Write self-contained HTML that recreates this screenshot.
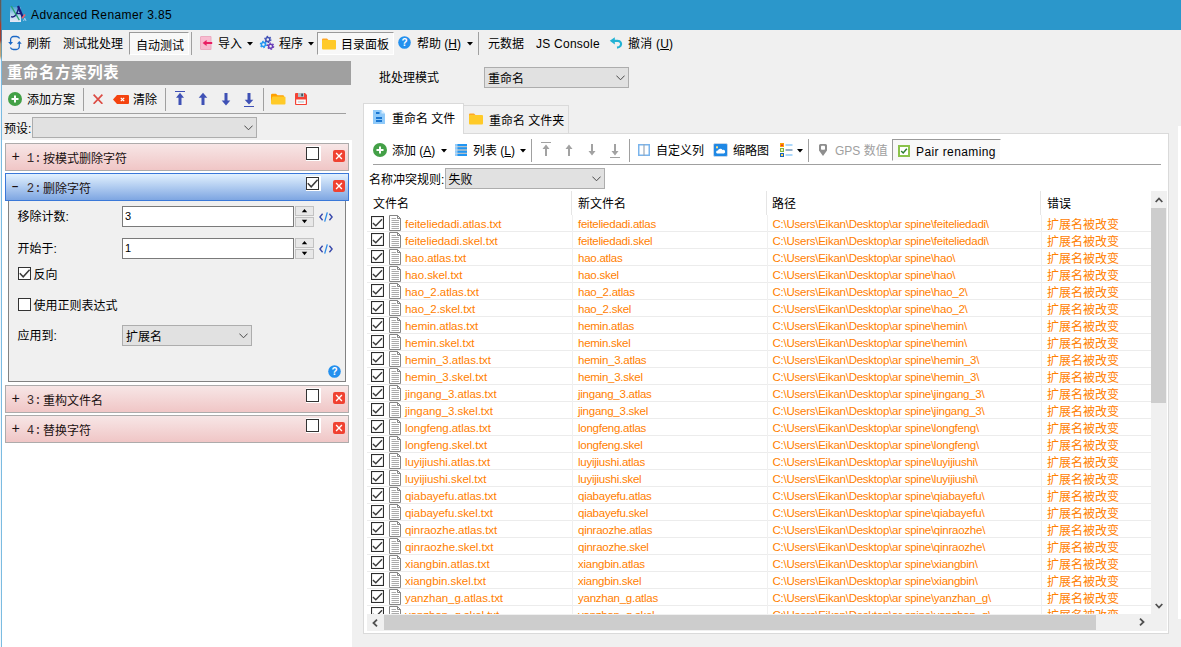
<!DOCTYPE html>
<html lang="zh"><head><meta charset="utf-8"><title>Advanced Renamer 3.85</title>
<style>
html,body{margin:0;padding:0}
body{width:1181px;height:647px;overflow:hidden;background:#f0f0f0;position:relative;font-family:"Liberation Sans","Noto Sans CJK SC",sans-serif;font-size:12px;color:#000}
div,span,svg{position:absolute;white-space:nowrap}
.t{line-height:16px;height:16px}
.edgeL{left:0;top:0;width:2px;height:647px;background:linear-gradient(#5c5c5c 0,#6a5a56 20px,#a43c2c 24px,#a8402e 40px,#c09a6c 44px,#c8a878 56px,#eef4fa 60px,#f4f8fc 100%)}
.edgeB{left:1px;top:0;width:1px;height:647px;background:rgba(59,155,210,.65)}
.title{left:2px;top:0;width:1179px;height:30px;background:#2b97cb}
.hdr{left:2px;top:61px;width:349px;height:24px;background:#a0a0a0}
.hdr span{left:5px;top:2px;letter-spacing:.65px;font:700 15.400px/20px "Liberation Sans","Noto Sans CJK SC",sans-serif;color:#fff}
.vsep{width:1px;background:#a0a0a0}
.combo{background:#e1e1e1;border:1px solid #adadad;box-sizing:border-box}
.white{background:#fff}
.item{left:5px;width:344px;height:28px;box-sizing:border-box;border:1px solid #adabab;background:linear-gradient(#f7e6e6,#f0c6c6)}
.item.sel{border-color:#3a78d8;background:linear-gradient(#e2f1fe,#7ea6e2)}
.cbw{width:15px;height:15px;background:#fff}
.xb{width:12px;height:12px;border-radius:2px;background:#f04131}
.row{left:0;width:784px;height:17px;border-bottom:1px solid #ececec;box-sizing:border-box;color:#ff8000;font-size:11.500px;line-height:16px}
.row .ck{left:4px;top:1px}
.row .fi{left:22px;top:0}
.row span{top:1px}
.c1{left:38px;letter-spacing:-.06px}
.c2{left:211px;letter-spacing:-.25px}
.c3{left:405.500px;letter-spacing:-.25px}
.row .c4{left:680px;font-size:12px;top:2px}
.pressed{box-sizing:border-box;background:#f8f8f8;border:1px solid;border-color:#9a9a9a #fff #fff #9a9a9a}
.item span{line-height:16px;font-size:12px;color:#1a1010}
.item .pm{left:5.500px;top:5px;font:14px/16px "Liberation Mono",monospace}
.item.sel .pm{transform:scaleX(1.450);transform-origin:50% 50%;left:5px}
.item .nm{left:20.800px;top:7px;font:12.300px/16px "Liberation Mono",monospace;color:#3a2c2c}
.item .lbl{left:37px;top:7px}
.panel{box-sizing:border-box;border:1px solid #828282;border-top:none;background:#f0f0f0}
.inp{box-sizing:border-box;background:#fff;border:1px solid #7a7a7a}
.cbw svg,.xb svg{left:0;top:0}
.cbw svg{left:0;top:1px}
.page{box-sizing:border-box;background:#fff;border:1px solid #dadada}
.tab1{box-sizing:border-box;background:#fff;border:1px solid #dadada;border-bottom:none}
.tab2{box-sizing:border-box;background:#f0f0f0;border:1px solid #dadada}
.cdiv{top:0;width:1px;height:24px;background:#e5e5e5}
.vg{top:24px;width:1px;height:400px;background:#f0f0f0}

</style></head>
<body>
<div class="edgeL"></div><div class="edgeB"></div>
<div class="title">
<div style="left:8px;top:7px;width:11px;height:15px;background:linear-gradient(#4ba3d5,#a9d0ec 45%,#e6e8f6)"></div>
<svg style="left:6px;top:4px" width="22" height="22" viewBox="0 0 22 22"><path d="M3 12.600C6 13.800 8 11.500 9.500 7.500L11 3.200" fill="none" stroke="#1c1c7a" stroke-width="1.500"/><path d="M10 2L14.800 13.200" fill="none" stroke="#1c1c7a" stroke-width="2.200"/><path d="M8 9.600H13.200" stroke="#1c1c7a" stroke-width="1.200"/><path d="M3.200 2.200L11.300 16.200" stroke="#2aa273" stroke-width="1.300"/><path d="M14.200 14.200L17 10.600" stroke="#f0606a" stroke-width="1.700"/><path d="M15.500 17L16.800 14.200 18 17" fill="none" stroke="#b4d2ee" stroke-width=".9"/></svg>
<span class="t" style="left:29px;top:7px;letter-spacing:.4px">Advanced Renamer 3.85</span></div>
<!-- main toolbar -->
<svg style="left:8px;top:35px" width="14" height="16" viewBox="0 0 14 16"><path d="M2.600 8V4.500A3 3 0 0 1 5.600 1.500H8.500A3.500 3.500 0 0 1 11.600 3.600" fill="none" stroke="#1a68c6" stroke-width="1.300"/><path d="M11.300 8V11.500A3 3 0 0 1 8.300 14.500H5.500A3.500 3.500 0 0 1 2.400 12.400" fill="none" stroke="#1a68c6" stroke-width="1.300"/><path d="M.2 7L2.600 9.900 5 7Z" fill="#1a68c6"/><path d="M8.900 8.800L11.300 5.900 13.700 8.800Z" fill="#1a68c6"/></svg>
<span class="t" style="left:27px;top:36px">刷新</span>
<span class="t" style="left:63px;top:36px">测试批处理</span>
<div class="pressed" style="left:129px;top:32px;width:60px;height:23px"></div>
<span class="t" style="left:136px;top:38px">自动测试</span>
<div class="vsep" style="left:191px;top:32px;height:23px"></div>
<svg style="left:200px;top:36px" width="13" height="14" viewBox="0 0 13 14"><path d="M11 .5H1A.5 .5 0 0 0 .5 1V13A.5 .5 0 0 0 1 13.500H11Z" fill="#f8bbd0" stroke="#ecaac0"/><path d="M4 7H12.200" stroke="#e91e63" stroke-width="2" fill="none"/><path d="M2.600 7L6.600 4V10Z" fill="#e91e63"/></svg>
<span class="t" style="left:218px;top:36px">导入</span>
<svg class="dd" style="left:246.500px;top:42px" width="6" height="3.500" viewBox="0 0 6 3.500"><path d="M0 0H6L3 3.500Z" fill="#000"/></svg>
<svg style="left:259px;top:35px" width="16" height="16" viewBox="0 0 16 16"><circle cx="8.8" cy="4.5" r="2" fill="none" stroke="#3f51b5" stroke-width="1.500"/><circle cx="8.8" cy="4.5" r="3.100" fill="none" stroke="#3f51b5" stroke-width="1.200" stroke-dasharray="1.620 1.620"/><circle cx="4.4" cy="9.5" r="2" fill="none" stroke="#2196f3" stroke-width="1.500"/><circle cx="4.4" cy="9.5" r="3.100" fill="none" stroke="#2196f3" stroke-width="1.200" stroke-dasharray="1.620 1.620"/><circle cx="11.6" cy="11.2" r="2" fill="none" stroke="#673ab7" stroke-width="1.500"/><circle cx="11.6" cy="11.2" r="3.100" fill="none" stroke="#673ab7" stroke-width="1.200" stroke-dasharray="1.620 1.620"/></svg>
<span class="t" style="left:279px;top:36px">程序</span>
<svg class="dd" style="left:307.500px;top:42px" width="6" height="3.500" viewBox="0 0 6 3.500"><path d="M0 0H6L3 3.500Z" fill="#000"/></svg>
<div class="pressed" style="left:317px;top:32px;width:77px;height:23px"></div>
<svg style="left:322px;top:38px" width="14" height="12" viewBox="0 0 14 12"><path d="M0 1.500A1 1 0 0 1 1 .5H5L6.500 2V4H0Z" fill="#ffa726"/><path d="M0 3A1 1 0 0 1 1 2H13A1 1 0 0 1 14 3V10.500A1 1 0 0 1 13 11.500H1A1 1 0 0 1 0 10.500Z" fill="#ffca28"/></svg>
<span class="t" style="left:341px;top:37px">目录面板</span>
<svg style="left:398.300px;top:36.200px" width="13" height="13" viewBox="0 0 13 13"><circle cx="6.500" cy="6.500" r="6.300" fill="#2490ee"/><text x="6.500" y="10" font-size="10" font-weight="bold" text-anchor="middle" fill="#fff" font-family="Liberation Sans,sans-serif">?</text></svg>
<span class="t" style="left:417px;top:36px">帮助 (<u>H</u>)</span>
<svg class="dd" style="left:466.500px;top:42px" width="6" height="3.500" viewBox="0 0 6 3.500"><path d="M0 0H6L3 3.500Z" fill="#000"/></svg>
<div class="vsep" style="left:478px;top:32px;height:23px"></div>
<span class="t" style="left:488px;top:36px">元数据</span>
<span class="t" style="left:536px;top:36px;letter-spacing:.25px">JS Console</span>
<svg style="left:609px;top:37px" width="14" height="12" viewBox="0 0 14 12"><path d="M5 3.800H8.600C11.500 3.800 13 6.500 11.600 8.800C10.900 9.900 9.600 10.500 8 10.700" fill="none" stroke="#22b2d4" stroke-width="2.200"/><path d="M.8 3.800L5.800 .2V7.400Z" fill="#22b2d4"/></svg>
<span class="t" style="left:628px;top:36px;letter-spacing:.2px">撤消 (<u>U</u>)</span>

<div class="hdr"><span>重命名方案列表</span></div>
<!-- scheme toolbar -->
<svg style="left:8px;top:92px" width="14" height="14" viewBox="0 0 14 14"><circle cx="7" cy="7" r="7" fill="#43a047"/><path d="M7 3.500V10.500M3.500 7H10.500" stroke="#fff" stroke-width="2"/></svg>
<span class="t" style="left:27px;top:92px">添加方案</span>
<div class="vsep" style="left:83px;top:88px;height:23px"></div>
<svg style="left:93px;top:94px" width="10" height="10" viewBox="0 0 10 10"><path d="M.6 .6L9.400 9.800M9.400 .6L.6 9.800" stroke="#dc4c44" stroke-width="1.700"/></svg>
<svg style="left:113px;top:95px" width="16" height="9" viewBox="0 0 16 9"><path d="M0 4.500L4 0H15A1 1 0 0 1 16 1V8A1 1 0 0 1 15 9H4Z" fill="#f4430f"/><path d="M7.800 2.800L11.200 6.200M11.200 2.800L7.800 6.200" stroke="#fff" stroke-width="1.200"/></svg>
<span class="t" style="left:133px;top:92px">清除</span>
<div class="vsep" style="left:165px;top:88px;height:23px"></div>
<svg style="left:175px;top:91px" width="10" height="14" viewBox="0 0 10 14"><path d="M0 .5H10" stroke="#3f51b5" stroke-width="1"/><path d="M5 1.700L9 6.700H6.500V14H3.500V6.700H1Z" fill="#3f51b5"/></svg>
<svg style="left:198px;top:91px" width="10" height="14" viewBox="0 0 10 14"><path d="M5 1.700L9.300 6.700H6.500V14H3.500V6.700H.7Z" fill="#3f51b5"/></svg>
<svg style="left:221px;top:93px" width="10" height="13" viewBox="0 0 10 13"><path d="M5 12.500L9.300 7.500H6.500V0H3.500V7.500H.7Z" fill="#3f51b5"/></svg>
<svg style="left:244px;top:93px" width="10" height="14" viewBox="0 0 10 14"><path d="M5 11.500L9.300 6.800H6.500V0H3.500V6.800H.7Z" fill="#3f51b5"/><path d="M0 13.500H10" stroke="#3f51b5" stroke-width="1"/></svg>
<div class="vsep" style="left:263px;top:88px;height:23px"></div>
<svg style="left:271px;top:93px" width="15" height="12" viewBox="0 0 15 12"><path d="M0 2A1.200 1.200 0 0 1 1.200 .8H5L6.500 2.300H12A1 1 0 0 1 13 3.300V10H0Z" fill="#ffa000"/><path d="M1 4.500A1 1 0 0 1 2 3.500H13.500A1 1 0 0 1 14.500 4.500V10.500A1 1 0 0 1 13.500 11.500H1.200A1.200 1.200 0 0 1 0 10.300V8Z" fill="#ffca28"/></svg>
<svg style="left:295px;top:93px" width="12" height="12" viewBox="0 0 12 12"><path d="M0 1A1 1 0 0 1 1 0H10L12 2V11A1 1 0 0 1 11 12H1A1 1 0 0 1 0 11Z" fill="#f44336"/><rect x="3" y="0" width="6" height="4" fill="#b0bec5"/><rect x="6.300" y=".6" width="1.600" height="2.700" fill="#37474f"/><rect x="1.200" y="6.500" width="9.600" height="4.500" fill="#fff"/><rect x="2.800" y="7.800" width="6.400" height="2" fill="#cfd8dc"/></svg>
<div style="left:8px;top:113px;width:338px;height:1px;background:#a0a0a0"></div>
<span class="t" style="left:4px;top:121px">预设:</span>
<div class="combo" style="left:32px;top:117px;width:225px;height:21px"><svg class="chev" style="left:211px;top:7px" width="9" height="6" viewBox="0 0 9 6"><path d="M.4 .6L4.500 4.800 8.600 .6" fill="none" stroke="#4a4a4a" stroke-width="1"/></svg></div>
<!-- list area -->
<div class="white" style="left:2px;top:140px;width:350px;height:507px"></div>
<div class="item" style="top:143px"><span class="pm">+</span><span class="nm">1:</span><span class="lbl">按模式删除字符</span></div>
<div class="cbw" style="left:306px;top:146px"><svg width="13" height="13" viewBox="0 0 13 13"><rect x=".5" y=".5" width="12" height="12" fill="#fff" stroke="#333"/></svg></div>
<div class="xb" style="left:333px;top:150px"><svg width="12" height="12" viewBox="0 0 12 12"><path d="M3.100 3.100L8.900 8.900M8.900 3.100L3.100 8.900" stroke="#fff" stroke-width="1.350"/></svg></div>
<div class="item sel" style="top:173px"><span class="pm">-</span><span class="nm">2:</span><span class="lbl">删除字符</span></div>
<div class="cbw" style="left:306px;top:176px"><svg width="13" height="13" viewBox="0 0 13 13"><rect x=".5" y=".5" width="12" height="12" fill="#fff" stroke="#333"/><path d="M1.800 6.200L5.200 9.800 11.600 2.800" fill="none" stroke="#3c3c3c" stroke-width="1.500"/></svg></div>
<div class="xb" style="left:333px;top:180px"><svg width="12" height="12" viewBox="0 0 12 12"><path d="M3.100 3.100L8.900 8.900M8.900 3.100L3.100 8.900" stroke="#fff" stroke-width="1.350"/></svg></div>
<div class="panel" style="left:8px;top:201px;width:338px;height:181px">
<span class="t" style="left:8.500px;top:8px">移除计数:</span>
<div class="inp" style="left:113px;top:5px;width:172px;height:21px"><span class="t" style="left:2px;top:1px;font-size:11px">3</span></div>
<div class="spin" style="left:286px;top:5px"><svg width="19" height="21" viewBox="0 0 19 21"><rect x=".5" y=".5" width="18" height="9" fill="#e8e8e8" stroke="#c2c2c2"/><rect x=".5" y="11.500" width="18" height="9" fill="#e8e8e8" stroke="#c2c2c2"/><path d="M6.800 6.300H12.200L9.500 3Z" fill="#000"/><path d="M6.800 13.800H12.200L9.500 17.200Z" fill="#000"/></svg></div>
<svg class="code" style="left:310px;top:11px" width="14" height="10" viewBox="0 0 14 10"><path d="M3.600 1.800L.9 5 3.600 8.200M10.400 1.800L13.100 5 10.400 8.200" fill="none" stroke="#3949ab" stroke-width="1.400"/><path d="M8.300 .3L5.700 9.700" fill="none" stroke="#2b8be6" stroke-width="1.300"/></svg>
<span class="t" style="left:8.500px;top:40px">开始于:</span>
<div class="inp" style="left:113px;top:37px;width:172px;height:21px"><span class="t" style="left:2px;top:1px;font-size:11px">1</span></div>
<div class="spin" style="left:286px;top:37px"><svg width="19" height="21" viewBox="0 0 19 21"><rect x=".5" y=".5" width="18" height="9" fill="#e8e8e8" stroke="#c2c2c2"/><rect x=".5" y="11.500" width="18" height="9" fill="#e8e8e8" stroke="#c2c2c2"/><path d="M6.800 6.300H12.200L9.500 3Z" fill="#000"/><path d="M6.800 13.800H12.200L9.500 17.200Z" fill="#000"/></svg></div>
<svg class="code" style="left:310px;top:43px" width="14" height="10" viewBox="0 0 14 10"><path d="M3.600 1.800L.9 5 3.600 8.200M10.400 1.800L13.100 5 10.400 8.200" fill="none" stroke="#3949ab" stroke-width="1.400"/><path d="M8.300 .3L5.700 9.700" fill="none" stroke="#2b8be6" stroke-width="1.300"/></svg>
<svg style="left:9px;top:66px" width="13" height="13" viewBox="0 0 13 13"><rect x=".5" y=".5" width="12" height="12" fill="#fff" stroke="#333"/><path d="M1.800 6.200L5.200 9.800 11.600 2.800" fill="none" stroke="#3c3c3c" stroke-width="1.500"/></svg>
<span class="t" style="left:24.500px;top:66px">反向</span>
<svg style="left:9px;top:97px" width="13" height="13" viewBox="0 0 13 13"><rect x=".5" y=".5" width="12" height="12" fill="#fff" stroke="#333"/></svg>
<span class="t" style="left:24.500px;top:97px">使用正则表达式</span>
<span class="t" style="left:8.500px;top:127px">应用到:</span>
<div class="combo" style="left:113px;top:124px;width:130px;height:21px"><span class="t" style="left:3px;top:3px">扩展名</span><svg class="chev" style="left:116px;top:7px" width="9" height="6" viewBox="0 0 9 6"><path d="M.4 .6L4.500 4.800 8.600 .6" fill="none" stroke="#4a4a4a" stroke-width="1"/></svg></div>
<svg style="left:318.6px;top:163.6px" width="13" height="13" viewBox="0 0 13 13"><circle cx="6.500" cy="6.500" r="6.300" fill="#2490ee"/><text x="6.500" y="10" font-size="10" font-weight="bold" text-anchor="middle" fill="#fff" font-family="Liberation Sans,sans-serif">?</text></svg>
</div>

<div class="item" style="top:385px"><span class="pm">+</span><span class="nm">3:</span><span class="lbl">重构文件名</span></div>
<div class="cbw" style="left:306px;top:388px"><svg width="13" height="13" viewBox="0 0 13 13"><rect x=".5" y=".5" width="12" height="12" fill="#fff" stroke="#333"/></svg></div>
<div class="xb" style="left:333px;top:392px"><svg width="12" height="12" viewBox="0 0 12 12"><path d="M3.100 3.100L8.900 8.900M8.900 3.100L3.100 8.900" stroke="#fff" stroke-width="1.350"/></svg></div>
<div class="item" style="top:415px"><span class="pm">+</span><span class="nm">4:</span><span class="lbl">替换字符</span></div>
<div class="cbw" style="left:306px;top:418px"><svg width="13" height="13" viewBox="0 0 13 13"><rect x=".5" y=".5" width="12" height="12" fill="#fff" stroke="#333"/></svg></div>
<div class="xb" style="left:333px;top:422px"><svg width="12" height="12" viewBox="0 0 12 12"><path d="M3.100 3.100L8.900 8.900M8.900 3.100L3.100 8.900" stroke="#fff" stroke-width="1.350"/></svg></div>

<!-- mode row -->
<span class="t" style="left:379px;top:70px">批处理模式</span>
<div class="combo" style="left:484px;top:67px;width:145px;height:21px"><span class="t" style="left:3px;top:3px">重命名</span><svg class="chev" style="left:131px;top:7px" width="9" height="6" viewBox="0 0 9 6"><path d="M.4 .6L4.500 4.800 8.600 .6" fill="none" stroke="#4a4a4a" stroke-width="1"/></svg></div>
<!-- right edge strip -->
<div class="white" style="left:1178px;top:126px;width:3px;height:493px"></div>
<!-- tab page -->
<div class="page" style="left:363px;top:133px;width:806px;height:501px"></div>
<div class="tab2" style="left:463px;top:105px;width:106px;height:29px"></div>
<div class="tab1" style="left:363px;top:103px;width:101px;height:31px"></div>
<svg style="left:373px;top:110px" width="12" height="14" viewBox="0 0 12 14"><path d="M0 0H8.500L12 3.500V14H0Z" fill="#90caf9"/><path d="M8.500 0V3.500H12Z" fill="#d6ebfc"/><path d="M3 3H6.500M3 8H9M3 11H9" stroke="#1976d2" stroke-width="1.800"/></svg>
<span class="t" style="left:392px;top:111px">重命名 文件</span>
<svg style="left:469px;top:113px" width="14" height="12" viewBox="0 0 14 12"><path d="M0 1.500A1 1 0 0 1 1 .5H5L6.500 2V4H0Z" fill="#ffa726"/><path d="M0 3A1 1 0 0 1 1 2H13A1 1 0 0 1 14 3V10.500A1 1 0 0 1 13 11.500H1A1 1 0 0 1 0 10.500Z" fill="#ffca28"/></svg>
<span class="t" style="left:489px;top:113px">重命名 文件夹</span>
<!-- list toolbar -->
<svg style="left:373px;top:143px" width="14" height="14" viewBox="0 0 14 14"><circle cx="7" cy="7" r="7" fill="#43a047"/><path d="M7 3.500V10.500M3.500 7H10.500" stroke="#fff" stroke-width="2"/></svg>
<span class="t" style="left:392px;top:143px">添加 (<u>A</u>)</span>
<svg class="dd" style="left:440.500px;top:149px" width="6" height="3.500" viewBox="0 0 6 3.500"><path d="M0 0H6L3 3.500Z" fill="#000"/></svg>
<svg style="left:455px;top:144px" width="12" height="12" viewBox="0 0 12 12"><rect x="0" y="0" width="12" height="12" fill="#b4c0c8"/><path d="M0 1H12M0 4.300H12M0 7.700H12M0 11H12" stroke="#2196f3" stroke-width="2"/><rect x="0" y="0" width="2.500" height="12" fill="#bbdefb" opacity=".75"/></svg>
<span class="t" style="left:473px;top:143px">列表 (<u>L</u>)</span>
<svg class="dd" style="left:519.500px;top:149px" width="6" height="3.500" viewBox="0 0 6 3.500"><path d="M0 0H6L3 3.500Z" fill="#000"/></svg>
<div class="vsep" style="left:531px;top:139px;height:23px"></div>
<svg style="left:541px;top:142px" width="10" height="14" viewBox="0 0 10 14"><path d="M0 .5H10" stroke="#a2a2a2"/><path d="M5 2.500L8.500 7H6V14H4V7H1.500Z" fill="#a2a2a2"/></svg>
<svg style="left:564px;top:144px" width="10" height="12" viewBox="0 0 10 12"><path d="M5 .5L8.500 5H6V12H4V5H1.500Z" fill="#a2a2a2"/></svg>
<svg style="left:587px;top:144px" width="10" height="12" viewBox="0 0 10 12"><path d="M5 11.500L8.500 7H6V0H4V7H1.500Z" fill="#a2a2a2"/></svg>
<svg style="left:610px;top:144px" width="10" height="14" viewBox="0 0 10 14"><path d="M5 11.500L8.500 7H6V0H4V7H1.500Z" fill="#a2a2a2"/><path d="M0 13.500H10" stroke="#a2a2a2"/></svg>
<div class="vsep" style="left:629px;top:139px;height:23px"></div>
<svg style="left:638px;top:144px" width="12" height="12" viewBox="0 0 12 12"><rect x=".75" y=".75" width="10.500" height="10.500" fill="#fff" stroke="#7ab4ec" stroke-width="1.500"/><path d="M6 0V12" stroke="#9aa8b8" stroke-width="1.200"/></svg>
<span class="t" style="left:656px;top:143px">自定义列</span>
<svg style="left:713px;top:143px" width="15" height="14" viewBox="0 0 15 14"><rect x=".5" y=".5" width="14" height="13" rx="1.500" fill="#1e88e5" stroke="#c4d6ea"/><rect x="1.500" y="1.500" width="12" height="11" rx=".5" fill="#1e88e5"/><path d="M4 10.500A1.600 1.600 0 0 1 5 7.500A2.400 2.400 0 0 1 9.500 7A1.800 1.800 0 0 1 11 10.500Z" fill="#fff"/><rect x="3" y="3.300" width="2" height="2" fill="#ffe082"/></svg>
<span class="t" style="left:733px;top:143px">缩略图</span>
<svg style="left:780px;top:143px" width="13" height="14" viewBox="0 0 13 14"><rect x="0" y="0" width="4" height="4" fill="#ffa000"/><rect x="1" y="1.500" width="2" height="1.500" fill="#e53935"/><rect x="0" y="5" width="4" height="4" fill="#7cb342"/><rect x="1" y="6" width="2" height="2" fill="#f0f4c3"/><rect x="0" y="10" width="4" height="4" fill="#1565c0"/><rect x="1" y="11" width="2" height="2" fill="#ffd54f"/><path d="M5.500 2H12.500M5.500 12H12.500" stroke="#90caf9" stroke-width="1.600"/><path d="M5.500 7H12.500" stroke="#7a9cbc" stroke-width="1.600"/></svg>
<svg class="dd" style="left:797px;top:149px" width="6" height="3.500" viewBox="0 0 6 3.500"><path d="M0 0H6L3 3.500Z" fill="#000"/></svg>
<div class="vsep" style="left:808px;top:139px;height:23px"></div>
<svg style="left:819px;top:144px" width="8" height="12" viewBox="0 0 8 12"><path d="M1.500 0H6.500A1.500 1.500 0 0 1 8 1.500V6.500L4 12 0 6.500V1.500A1.500 1.500 0 0 1 1.500 0Z" fill="#8e8e8e"/><rect x="2" y="1.800" width="4" height="4" rx=".8" fill="#fff"/></svg>
<span class="t" style="left:835px;top:143px;color:#a0a0a0">GPS 数值</span>
<div class="pressed" style="left:892px;top:139px;width:109px;height:22px"></div>
<svg style="left:898px;top:145px" width="12" height="12" viewBox="0 0 12 12"><rect x="1" y="1" width="10" height="10" fill="#fff" stroke="#8bc34a" stroke-width="2"/><path d="M3.200 6L5.200 8 8.800 3.800" fill="none" stroke="#2e7d32" stroke-width="1.500"/></svg>
<span class="t" style="left:916px;top:144px;letter-spacing:.4px">Pair renaming</span>
<div style="left:373px;top:164px;width:788px;height:1px;background:#a0a0a0"></div>
<!-- conflict -->
<span class="t" style="left:369px;top:172px">名称冲突规则:</span>
<div class="combo" style="left:445px;top:168px;width:160px;height:21px"><span class="t" style="left:2.500px;top:3px">失败</span><svg class="chev" style="left:146px;top:7px" width="9" height="6" viewBox="0 0 9 6"><path d="M.4 .6L4.500 4.800 8.600 .6" fill="none" stroke="#4a4a4a" stroke-width="1"/></svg></div>
<!-- list -->
<div class="white" style="left:367px;top:191px;width:784px;height:423px;overflow:hidden">
<span class="t" style="left:6px;top:5px">文件名</span>
<span class="t" style="left:211px;top:5px">新文件名</span>
<span class="t" style="left:405px;top:5px">路径</span>
<span class="t" style="left:680px;top:5px">错误</span>
<div class="cdiv" style="left:204px"></div><div class="cdiv" style="left:399px"></div><div class="cdiv" style="left:673px"></div>
<div class="row" style="top:24px"><svg class="ck" width="13" height="13" viewBox="0 0 13 13"><rect x=".5" y=".5" width="12" height="12" fill="#fff" stroke="#2e2e2e" stroke-width="1.150"/><path d="M1.900 6.900L4.800 9.700 11 3.300" fill="none" stroke="#3a3a3a" stroke-width="1.400"/></svg><svg class="fi" width="12" height="16" viewBox="0 0 12 16"><path d="M.5 .5H8.500L11.500 3.500V15.500H.5Z" fill="#fff" stroke="#858585"/><path d="M8.500 .5V3.500H11.500" fill="none" stroke="#858585"/><path d="M2.500 3.500H7M2.500 5.500H10M2.500 7.500H10M2.500 9.500H10M2.500 11.500H10M2.500 13.500H10" stroke="#9c9c9c" stroke-width=".85"/></svg><span class="c1">feiteliedadi.atlas.txt</span><span class="c2">feiteliedadi.atlas</span><span class="c3">C:\Users\Eikan\Desktop\ar spine\feiteliedadi\</span><span class="c4">扩展名被改变</span></div>
<div class="row" style="top:41px"><svg class="ck" width="13" height="13" viewBox="0 0 13 13"><rect x=".5" y=".5" width="12" height="12" fill="#fff" stroke="#2e2e2e" stroke-width="1.150"/><path d="M1.900 6.900L4.800 9.700 11 3.300" fill="none" stroke="#3a3a3a" stroke-width="1.400"/></svg><svg class="fi" width="12" height="16" viewBox="0 0 12 16"><path d="M.5 .5H8.500L11.500 3.500V15.500H.5Z" fill="#fff" stroke="#858585"/><path d="M8.500 .5V3.500H11.500" fill="none" stroke="#858585"/><path d="M2.500 3.500H7M2.500 5.500H10M2.500 7.500H10M2.500 9.500H10M2.500 11.500H10M2.500 13.500H10" stroke="#9c9c9c" stroke-width=".85"/></svg><span class="c1">feiteliedadi.skel.txt</span><span class="c2">feiteliedadi.skel</span><span class="c3">C:\Users\Eikan\Desktop\ar spine\feiteliedadi\</span><span class="c4">扩展名被改变</span></div>
<div class="row" style="top:58px"><svg class="ck" width="13" height="13" viewBox="0 0 13 13"><rect x=".5" y=".5" width="12" height="12" fill="#fff" stroke="#2e2e2e" stroke-width="1.150"/><path d="M1.900 6.900L4.800 9.700 11 3.300" fill="none" stroke="#3a3a3a" stroke-width="1.400"/></svg><svg class="fi" width="12" height="16" viewBox="0 0 12 16"><path d="M.5 .5H8.500L11.500 3.500V15.500H.5Z" fill="#fff" stroke="#858585"/><path d="M8.500 .5V3.500H11.500" fill="none" stroke="#858585"/><path d="M2.500 3.500H7M2.500 5.500H10M2.500 7.500H10M2.500 9.500H10M2.500 11.500H10M2.500 13.500H10" stroke="#9c9c9c" stroke-width=".85"/></svg><span class="c1">hao.atlas.txt</span><span class="c2">hao.atlas</span><span class="c3">C:\Users\Eikan\Desktop\ar spine\hao\</span><span class="c4">扩展名被改变</span></div>
<div class="row" style="top:75px"><svg class="ck" width="13" height="13" viewBox="0 0 13 13"><rect x=".5" y=".5" width="12" height="12" fill="#fff" stroke="#2e2e2e" stroke-width="1.150"/><path d="M1.900 6.900L4.800 9.700 11 3.300" fill="none" stroke="#3a3a3a" stroke-width="1.400"/></svg><svg class="fi" width="12" height="16" viewBox="0 0 12 16"><path d="M.5 .5H8.500L11.500 3.500V15.500H.5Z" fill="#fff" stroke="#858585"/><path d="M8.500 .5V3.500H11.500" fill="none" stroke="#858585"/><path d="M2.500 3.500H7M2.500 5.500H10M2.500 7.500H10M2.500 9.500H10M2.500 11.500H10M2.500 13.500H10" stroke="#9c9c9c" stroke-width=".85"/></svg><span class="c1">hao.skel.txt</span><span class="c2">hao.skel</span><span class="c3">C:\Users\Eikan\Desktop\ar spine\hao\</span><span class="c4">扩展名被改变</span></div>
<div class="row" style="top:92px"><svg class="ck" width="13" height="13" viewBox="0 0 13 13"><rect x=".5" y=".5" width="12" height="12" fill="#fff" stroke="#2e2e2e" stroke-width="1.150"/><path d="M1.900 6.900L4.800 9.700 11 3.300" fill="none" stroke="#3a3a3a" stroke-width="1.400"/></svg><svg class="fi" width="12" height="16" viewBox="0 0 12 16"><path d="M.5 .5H8.500L11.500 3.500V15.500H.5Z" fill="#fff" stroke="#858585"/><path d="M8.500 .5V3.500H11.500" fill="none" stroke="#858585"/><path d="M2.500 3.500H7M2.500 5.500H10M2.500 7.500H10M2.500 9.500H10M2.500 11.500H10M2.500 13.500H10" stroke="#9c9c9c" stroke-width=".85"/></svg><span class="c1">hao_2.atlas.txt</span><span class="c2">hao_2.atlas</span><span class="c3">C:\Users\Eikan\Desktop\ar spine\hao_2\</span><span class="c4">扩展名被改变</span></div>
<div class="row" style="top:109px"><svg class="ck" width="13" height="13" viewBox="0 0 13 13"><rect x=".5" y=".5" width="12" height="12" fill="#fff" stroke="#2e2e2e" stroke-width="1.150"/><path d="M1.900 6.900L4.800 9.700 11 3.300" fill="none" stroke="#3a3a3a" stroke-width="1.400"/></svg><svg class="fi" width="12" height="16" viewBox="0 0 12 16"><path d="M.5 .5H8.500L11.500 3.500V15.500H.5Z" fill="#fff" stroke="#858585"/><path d="M8.500 .5V3.500H11.500" fill="none" stroke="#858585"/><path d="M2.500 3.500H7M2.500 5.500H10M2.500 7.500H10M2.500 9.500H10M2.500 11.500H10M2.500 13.500H10" stroke="#9c9c9c" stroke-width=".85"/></svg><span class="c1">hao_2.skel.txt</span><span class="c2">hao_2.skel</span><span class="c3">C:\Users\Eikan\Desktop\ar spine\hao_2\</span><span class="c4">扩展名被改变</span></div>
<div class="row" style="top:126px"><svg class="ck" width="13" height="13" viewBox="0 0 13 13"><rect x=".5" y=".5" width="12" height="12" fill="#fff" stroke="#2e2e2e" stroke-width="1.150"/><path d="M1.900 6.900L4.800 9.700 11 3.300" fill="none" stroke="#3a3a3a" stroke-width="1.400"/></svg><svg class="fi" width="12" height="16" viewBox="0 0 12 16"><path d="M.5 .5H8.500L11.500 3.500V15.500H.5Z" fill="#fff" stroke="#858585"/><path d="M8.500 .5V3.500H11.500" fill="none" stroke="#858585"/><path d="M2.500 3.500H7M2.500 5.500H10M2.500 7.500H10M2.500 9.500H10M2.500 11.500H10M2.500 13.500H10" stroke="#9c9c9c" stroke-width=".85"/></svg><span class="c1">hemin.atlas.txt</span><span class="c2">hemin.atlas</span><span class="c3">C:\Users\Eikan\Desktop\ar spine\hemin\</span><span class="c4">扩展名被改变</span></div>
<div class="row" style="top:143px"><svg class="ck" width="13" height="13" viewBox="0 0 13 13"><rect x=".5" y=".5" width="12" height="12" fill="#fff" stroke="#2e2e2e" stroke-width="1.150"/><path d="M1.900 6.900L4.800 9.700 11 3.300" fill="none" stroke="#3a3a3a" stroke-width="1.400"/></svg><svg class="fi" width="12" height="16" viewBox="0 0 12 16"><path d="M.5 .5H8.500L11.500 3.500V15.500H.5Z" fill="#fff" stroke="#858585"/><path d="M8.500 .5V3.500H11.500" fill="none" stroke="#858585"/><path d="M2.500 3.500H7M2.500 5.500H10M2.500 7.500H10M2.500 9.500H10M2.500 11.500H10M2.500 13.500H10" stroke="#9c9c9c" stroke-width=".85"/></svg><span class="c1">hemin.skel.txt</span><span class="c2">hemin.skel</span><span class="c3">C:\Users\Eikan\Desktop\ar spine\hemin\</span><span class="c4">扩展名被改变</span></div>
<div class="row" style="top:160px"><svg class="ck" width="13" height="13" viewBox="0 0 13 13"><rect x=".5" y=".5" width="12" height="12" fill="#fff" stroke="#2e2e2e" stroke-width="1.150"/><path d="M1.900 6.900L4.800 9.700 11 3.300" fill="none" stroke="#3a3a3a" stroke-width="1.400"/></svg><svg class="fi" width="12" height="16" viewBox="0 0 12 16"><path d="M.5 .5H8.500L11.500 3.500V15.500H.5Z" fill="#fff" stroke="#858585"/><path d="M8.500 .5V3.500H11.500" fill="none" stroke="#858585"/><path d="M2.500 3.500H7M2.500 5.500H10M2.500 7.500H10M2.500 9.500H10M2.500 11.500H10M2.500 13.500H10" stroke="#9c9c9c" stroke-width=".85"/></svg><span class="c1">hemin_3.atlas.txt</span><span class="c2">hemin_3.atlas</span><span class="c3">C:\Users\Eikan\Desktop\ar spine\hemin_3\</span><span class="c4">扩展名被改变</span></div>
<div class="row" style="top:177px"><svg class="ck" width="13" height="13" viewBox="0 0 13 13"><rect x=".5" y=".5" width="12" height="12" fill="#fff" stroke="#2e2e2e" stroke-width="1.150"/><path d="M1.900 6.900L4.800 9.700 11 3.300" fill="none" stroke="#3a3a3a" stroke-width="1.400"/></svg><svg class="fi" width="12" height="16" viewBox="0 0 12 16"><path d="M.5 .5H8.500L11.500 3.500V15.500H.5Z" fill="#fff" stroke="#858585"/><path d="M8.500 .5V3.500H11.500" fill="none" stroke="#858585"/><path d="M2.500 3.500H7M2.500 5.500H10M2.500 7.500H10M2.500 9.500H10M2.500 11.500H10M2.500 13.500H10" stroke="#9c9c9c" stroke-width=".85"/></svg><span class="c1">hemin_3.skel.txt</span><span class="c2">hemin_3.skel</span><span class="c3">C:\Users\Eikan\Desktop\ar spine\hemin_3\</span><span class="c4">扩展名被改变</span></div>
<div class="row" style="top:194px"><svg class="ck" width="13" height="13" viewBox="0 0 13 13"><rect x=".5" y=".5" width="12" height="12" fill="#fff" stroke="#2e2e2e" stroke-width="1.150"/><path d="M1.900 6.900L4.800 9.700 11 3.300" fill="none" stroke="#3a3a3a" stroke-width="1.400"/></svg><svg class="fi" width="12" height="16" viewBox="0 0 12 16"><path d="M.5 .5H8.500L11.500 3.500V15.500H.5Z" fill="#fff" stroke="#858585"/><path d="M8.500 .5V3.500H11.500" fill="none" stroke="#858585"/><path d="M2.500 3.500H7M2.500 5.500H10M2.500 7.500H10M2.500 9.500H10M2.500 11.500H10M2.500 13.500H10" stroke="#9c9c9c" stroke-width=".85"/></svg><span class="c1">jingang_3.atlas.txt</span><span class="c2">jingang_3.atlas</span><span class="c3">C:\Users\Eikan\Desktop\ar spine\jingang_3\</span><span class="c4">扩展名被改变</span></div>
<div class="row" style="top:211px"><svg class="ck" width="13" height="13" viewBox="0 0 13 13"><rect x=".5" y=".5" width="12" height="12" fill="#fff" stroke="#2e2e2e" stroke-width="1.150"/><path d="M1.900 6.900L4.800 9.700 11 3.300" fill="none" stroke="#3a3a3a" stroke-width="1.400"/></svg><svg class="fi" width="12" height="16" viewBox="0 0 12 16"><path d="M.5 .5H8.500L11.500 3.500V15.500H.5Z" fill="#fff" stroke="#858585"/><path d="M8.500 .5V3.500H11.500" fill="none" stroke="#858585"/><path d="M2.500 3.500H7M2.500 5.500H10M2.500 7.500H10M2.500 9.500H10M2.500 11.500H10M2.500 13.500H10" stroke="#9c9c9c" stroke-width=".85"/></svg><span class="c1">jingang_3.skel.txt</span><span class="c2">jingang_3.skel</span><span class="c3">C:\Users\Eikan\Desktop\ar spine\jingang_3\</span><span class="c4">扩展名被改变</span></div>
<div class="row" style="top:228px"><svg class="ck" width="13" height="13" viewBox="0 0 13 13"><rect x=".5" y=".5" width="12" height="12" fill="#fff" stroke="#2e2e2e" stroke-width="1.150"/><path d="M1.900 6.900L4.800 9.700 11 3.300" fill="none" stroke="#3a3a3a" stroke-width="1.400"/></svg><svg class="fi" width="12" height="16" viewBox="0 0 12 16"><path d="M.5 .5H8.500L11.500 3.500V15.500H.5Z" fill="#fff" stroke="#858585"/><path d="M8.500 .5V3.500H11.500" fill="none" stroke="#858585"/><path d="M2.500 3.500H7M2.500 5.500H10M2.500 7.500H10M2.500 9.500H10M2.500 11.500H10M2.500 13.500H10" stroke="#9c9c9c" stroke-width=".85"/></svg><span class="c1">longfeng.atlas.txt</span><span class="c2">longfeng.atlas</span><span class="c3">C:\Users\Eikan\Desktop\ar spine\longfeng\</span><span class="c4">扩展名被改变</span></div>
<div class="row" style="top:245px"><svg class="ck" width="13" height="13" viewBox="0 0 13 13"><rect x=".5" y=".5" width="12" height="12" fill="#fff" stroke="#2e2e2e" stroke-width="1.150"/><path d="M1.900 6.900L4.800 9.700 11 3.300" fill="none" stroke="#3a3a3a" stroke-width="1.400"/></svg><svg class="fi" width="12" height="16" viewBox="0 0 12 16"><path d="M.5 .5H8.500L11.500 3.500V15.500H.5Z" fill="#fff" stroke="#858585"/><path d="M8.500 .5V3.500H11.500" fill="none" stroke="#858585"/><path d="M2.500 3.500H7M2.500 5.500H10M2.500 7.500H10M2.500 9.500H10M2.500 11.500H10M2.500 13.500H10" stroke="#9c9c9c" stroke-width=".85"/></svg><span class="c1">longfeng.skel.txt</span><span class="c2">longfeng.skel</span><span class="c3">C:\Users\Eikan\Desktop\ar spine\longfeng\</span><span class="c4">扩展名被改变</span></div>
<div class="row" style="top:262px"><svg class="ck" width="13" height="13" viewBox="0 0 13 13"><rect x=".5" y=".5" width="12" height="12" fill="#fff" stroke="#2e2e2e" stroke-width="1.150"/><path d="M1.900 6.900L4.800 9.700 11 3.300" fill="none" stroke="#3a3a3a" stroke-width="1.400"/></svg><svg class="fi" width="12" height="16" viewBox="0 0 12 16"><path d="M.5 .5H8.500L11.500 3.500V15.500H.5Z" fill="#fff" stroke="#858585"/><path d="M8.500 .5V3.500H11.500" fill="none" stroke="#858585"/><path d="M2.500 3.500H7M2.500 5.500H10M2.500 7.500H10M2.500 9.500H10M2.500 11.500H10M2.500 13.500H10" stroke="#9c9c9c" stroke-width=".85"/></svg><span class="c1">luyijiushi.atlas.txt</span><span class="c2">luyijiushi.atlas</span><span class="c3">C:\Users\Eikan\Desktop\ar spine\luyijiushi\</span><span class="c4">扩展名被改变</span></div>
<div class="row" style="top:279px"><svg class="ck" width="13" height="13" viewBox="0 0 13 13"><rect x=".5" y=".5" width="12" height="12" fill="#fff" stroke="#2e2e2e" stroke-width="1.150"/><path d="M1.900 6.900L4.800 9.700 11 3.300" fill="none" stroke="#3a3a3a" stroke-width="1.400"/></svg><svg class="fi" width="12" height="16" viewBox="0 0 12 16"><path d="M.5 .5H8.500L11.500 3.500V15.500H.5Z" fill="#fff" stroke="#858585"/><path d="M8.500 .5V3.500H11.500" fill="none" stroke="#858585"/><path d="M2.500 3.500H7M2.500 5.500H10M2.500 7.500H10M2.500 9.500H10M2.500 11.500H10M2.500 13.500H10" stroke="#9c9c9c" stroke-width=".85"/></svg><span class="c1">luyijiushi.skel.txt</span><span class="c2">luyijiushi.skel</span><span class="c3">C:\Users\Eikan\Desktop\ar spine\luyijiushi\</span><span class="c4">扩展名被改变</span></div>
<div class="row" style="top:296px"><svg class="ck" width="13" height="13" viewBox="0 0 13 13"><rect x=".5" y=".5" width="12" height="12" fill="#fff" stroke="#2e2e2e" stroke-width="1.150"/><path d="M1.900 6.900L4.800 9.700 11 3.300" fill="none" stroke="#3a3a3a" stroke-width="1.400"/></svg><svg class="fi" width="12" height="16" viewBox="0 0 12 16"><path d="M.5 .5H8.500L11.500 3.500V15.500H.5Z" fill="#fff" stroke="#858585"/><path d="M8.500 .5V3.500H11.500" fill="none" stroke="#858585"/><path d="M2.500 3.500H7M2.500 5.500H10M2.500 7.500H10M2.500 9.500H10M2.500 11.500H10M2.500 13.500H10" stroke="#9c9c9c" stroke-width=".85"/></svg><span class="c1">qiabayefu.atlas.txt</span><span class="c2">qiabayefu.atlas</span><span class="c3">C:\Users\Eikan\Desktop\ar spine\qiabayefu\</span><span class="c4">扩展名被改变</span></div>
<div class="row" style="top:313px"><svg class="ck" width="13" height="13" viewBox="0 0 13 13"><rect x=".5" y=".5" width="12" height="12" fill="#fff" stroke="#2e2e2e" stroke-width="1.150"/><path d="M1.900 6.900L4.800 9.700 11 3.300" fill="none" stroke="#3a3a3a" stroke-width="1.400"/></svg><svg class="fi" width="12" height="16" viewBox="0 0 12 16"><path d="M.5 .5H8.500L11.500 3.500V15.500H.5Z" fill="#fff" stroke="#858585"/><path d="M8.500 .5V3.500H11.500" fill="none" stroke="#858585"/><path d="M2.500 3.500H7M2.500 5.500H10M2.500 7.500H10M2.500 9.500H10M2.500 11.500H10M2.500 13.500H10" stroke="#9c9c9c" stroke-width=".85"/></svg><span class="c1">qiabayefu.skel.txt</span><span class="c2">qiabayefu.skel</span><span class="c3">C:\Users\Eikan\Desktop\ar spine\qiabayefu\</span><span class="c4">扩展名被改变</span></div>
<div class="row" style="top:330px"><svg class="ck" width="13" height="13" viewBox="0 0 13 13"><rect x=".5" y=".5" width="12" height="12" fill="#fff" stroke="#2e2e2e" stroke-width="1.150"/><path d="M1.900 6.900L4.800 9.700 11 3.300" fill="none" stroke="#3a3a3a" stroke-width="1.400"/></svg><svg class="fi" width="12" height="16" viewBox="0 0 12 16"><path d="M.5 .5H8.500L11.500 3.500V15.500H.5Z" fill="#fff" stroke="#858585"/><path d="M8.500 .5V3.500H11.500" fill="none" stroke="#858585"/><path d="M2.500 3.500H7M2.500 5.500H10M2.500 7.500H10M2.500 9.500H10M2.500 11.500H10M2.500 13.500H10" stroke="#9c9c9c" stroke-width=".85"/></svg><span class="c1">qinraozhe.atlas.txt</span><span class="c2">qinraozhe.atlas</span><span class="c3">C:\Users\Eikan\Desktop\ar spine\qinraozhe\</span><span class="c4">扩展名被改变</span></div>
<div class="row" style="top:347px"><svg class="ck" width="13" height="13" viewBox="0 0 13 13"><rect x=".5" y=".5" width="12" height="12" fill="#fff" stroke="#2e2e2e" stroke-width="1.150"/><path d="M1.900 6.900L4.800 9.700 11 3.300" fill="none" stroke="#3a3a3a" stroke-width="1.400"/></svg><svg class="fi" width="12" height="16" viewBox="0 0 12 16"><path d="M.5 .5H8.500L11.500 3.500V15.500H.5Z" fill="#fff" stroke="#858585"/><path d="M8.500 .5V3.500H11.500" fill="none" stroke="#858585"/><path d="M2.500 3.500H7M2.500 5.500H10M2.500 7.500H10M2.500 9.500H10M2.500 11.500H10M2.500 13.500H10" stroke="#9c9c9c" stroke-width=".85"/></svg><span class="c1">qinraozhe.skel.txt</span><span class="c2">qinraozhe.skel</span><span class="c3">C:\Users\Eikan\Desktop\ar spine\qinraozhe\</span><span class="c4">扩展名被改变</span></div>
<div class="row" style="top:364px"><svg class="ck" width="13" height="13" viewBox="0 0 13 13"><rect x=".5" y=".5" width="12" height="12" fill="#fff" stroke="#2e2e2e" stroke-width="1.150"/><path d="M1.900 6.900L4.800 9.700 11 3.300" fill="none" stroke="#3a3a3a" stroke-width="1.400"/></svg><svg class="fi" width="12" height="16" viewBox="0 0 12 16"><path d="M.5 .5H8.500L11.500 3.500V15.500H.5Z" fill="#fff" stroke="#858585"/><path d="M8.500 .5V3.500H11.500" fill="none" stroke="#858585"/><path d="M2.500 3.500H7M2.500 5.500H10M2.500 7.500H10M2.500 9.500H10M2.500 11.500H10M2.500 13.500H10" stroke="#9c9c9c" stroke-width=".85"/></svg><span class="c1">xiangbin.atlas.txt</span><span class="c2">xiangbin.atlas</span><span class="c3">C:\Users\Eikan\Desktop\ar spine\xiangbin\</span><span class="c4">扩展名被改变</span></div>
<div class="row" style="top:381px"><svg class="ck" width="13" height="13" viewBox="0 0 13 13"><rect x=".5" y=".5" width="12" height="12" fill="#fff" stroke="#2e2e2e" stroke-width="1.150"/><path d="M1.900 6.900L4.800 9.700 11 3.300" fill="none" stroke="#3a3a3a" stroke-width="1.400"/></svg><svg class="fi" width="12" height="16" viewBox="0 0 12 16"><path d="M.5 .5H8.500L11.500 3.500V15.500H.5Z" fill="#fff" stroke="#858585"/><path d="M8.500 .5V3.500H11.500" fill="none" stroke="#858585"/><path d="M2.500 3.500H7M2.500 5.500H10M2.500 7.500H10M2.500 9.500H10M2.500 11.500H10M2.500 13.500H10" stroke="#9c9c9c" stroke-width=".85"/></svg><span class="c1">xiangbin.skel.txt</span><span class="c2">xiangbin.skel</span><span class="c3">C:\Users\Eikan\Desktop\ar spine\xiangbin\</span><span class="c4">扩展名被改变</span></div>
<div class="row" style="top:398px"><svg class="ck" width="13" height="13" viewBox="0 0 13 13"><rect x=".5" y=".5" width="12" height="12" fill="#fff" stroke="#2e2e2e" stroke-width="1.150"/><path d="M1.900 6.900L4.800 9.700 11 3.300" fill="none" stroke="#3a3a3a" stroke-width="1.400"/></svg><svg class="fi" width="12" height="16" viewBox="0 0 12 16"><path d="M.5 .5H8.500L11.500 3.500V15.500H.5Z" fill="#fff" stroke="#858585"/><path d="M8.500 .5V3.500H11.500" fill="none" stroke="#858585"/><path d="M2.500 3.500H7M2.500 5.500H10M2.500 7.500H10M2.500 9.500H10M2.500 11.500H10M2.500 13.500H10" stroke="#9c9c9c" stroke-width=".85"/></svg><span class="c1">yanzhan_g.atlas.txt</span><span class="c2">yanzhan_g.atlas</span><span class="c3">C:\Users\Eikan\Desktop\ar spine\yanzhan_g\</span><span class="c4">扩展名被改变</span></div>
<div class="row" style="top:415px"><svg class="ck" width="13" height="13" viewBox="0 0 13 13"><rect x=".5" y=".5" width="12" height="12" fill="#fff" stroke="#2e2e2e" stroke-width="1.150"/><path d="M1.900 6.900L4.800 9.700 11 3.300" fill="none" stroke="#3a3a3a" stroke-width="1.400"/></svg><svg class="fi" width="12" height="16" viewBox="0 0 12 16"><path d="M.5 .5H8.500L11.500 3.500V15.500H.5Z" fill="#fff" stroke="#858585"/><path d="M8.500 .5V3.500H11.500" fill="none" stroke="#858585"/><path d="M2.500 3.500H7M2.500 5.500H10M2.500 7.500H10M2.500 9.500H10M2.500 11.500H10M2.500 13.500H10" stroke="#9c9c9c" stroke-width=".85"/></svg><span class="c1">yanzhan_g.skel.txt</span><span class="c2">yanzhan_g.skel</span><span class="c3">C:\Users\Eikan\Desktop\ar spine\yanzhan_g\</span><span class="c4">扩展名被改变</span></div>
<div class="vg" style="left:205px"></div><div class="vg" style="left:400px"></div><div class="vg" style="left:674px"></div>
</div>
<!-- v scrollbar -->
<div style="left:1151px;top:191px;width:16px;height:440px;background:#f0f0f0"></div>
<div style="left:1151px;top:208px;width:15px;height:195px;background:#cdcdcd"></div>
<svg style="left:1155px;top:197px" width="8" height="6" viewBox="0 0 8 6"><path d="M.7 5L4 1.500 7.300 5" fill="none" stroke="#505050" stroke-width="1.800"/></svg>
<svg style="left:1155px;top:603px" width="8" height="6" viewBox="0 0 8 6"><path d="M.7 1L4 4.500 7.300 1" fill="none" stroke="#505050" stroke-width="1.800"/></svg>
<!-- h scrollbar -->
<div style="left:367px;top:614px;width:784px;height:17px;background:#f0f0f0"></div>
<div style="left:384px;top:615px;width:712px;height:15px;background:#cdcdcd"></div>
<svg style="left:372px;top:619px" width="6" height="8" viewBox="0 0 6 8"><path d="M5 .7L1.500 4 5 7.300" fill="none" stroke="#505050" stroke-width="1.800"/></svg>
<svg style="left:1139px;top:618px" width="6" height="8" viewBox="0 0 6 8"><path d="M1 .7L4.500 4 1 7.300" fill="none" stroke="#505050" stroke-width="1.800"/></svg>

</body></html>
